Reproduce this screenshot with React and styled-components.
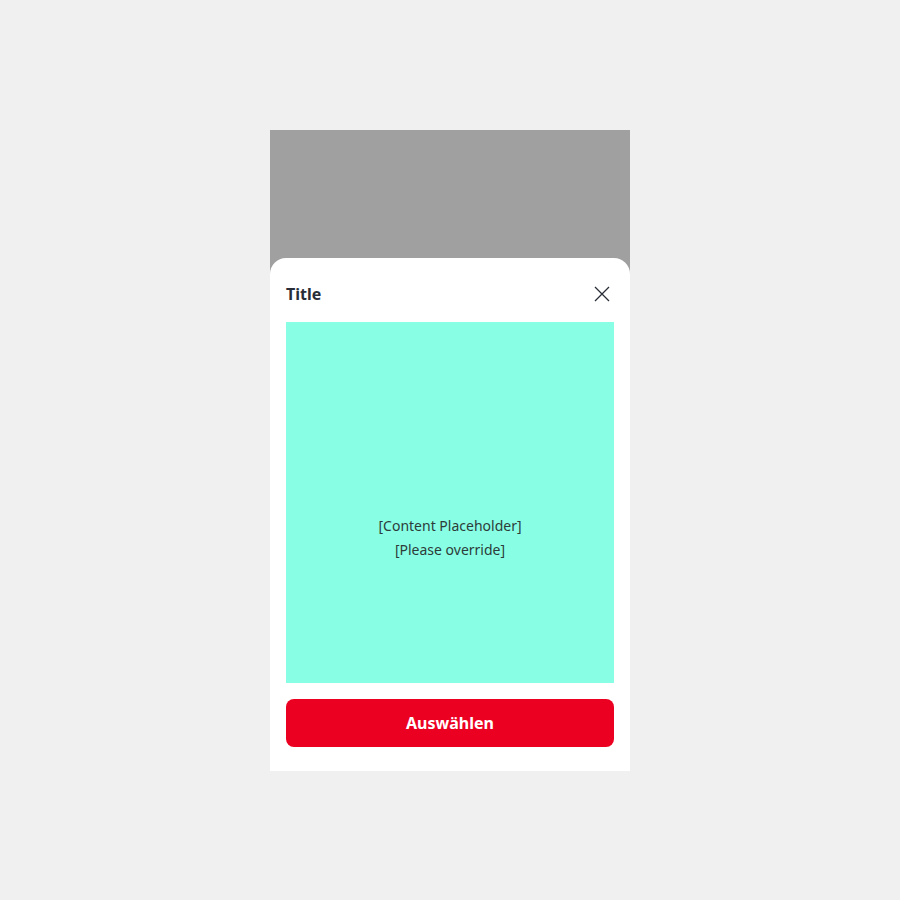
import React from 'react'
import styled, { createGlobalStyle } from 'styled-components'

const GlobalStyle = createGlobalStyle`
    html, body {
        margin: 0;
        padding: 0;
        background: #f0f0f0;
        font-family: "Noto Sans", "Open Sans", sans-serif;
    }
`

function CloseIcon() {
    return (
        <svg width="24" height="24" viewBox="0 0 24 24" fill="none">
            <path d="M5 5L19 19M19 5L5 19" stroke="#282d37" strokeWidth="1.3" />
        </svg>
    )
}

export default function App() {
    return (
        <Page>
            <GlobalStyle />
            <Frame>
                <Backdrop />
                <Sheet>
                    <Header>
                        <Title>Title</Title>
                        <CloseButton aria-label="Close">
                            <CloseIcon />
                        </CloseButton>
                    </Header>
                    <Placeholder>
                        <span>[Content Placeholder]</span>
                        <span>[Please override]</span>
                    </Placeholder>
                    <PrimaryButton>Auswählen</PrimaryButton>
                </Sheet>
            </Frame>
        </Page>
    )
}

const Page = styled.div`
    width: 900px;
    height: 900px;
    display: flex;
    justify-content: center;
    padding-top: 130px;
    box-sizing: border-box;
`

const Frame = styled.div`
    width: 360px;
    height: 641px;
    display: flex;
    flex-direction: column;
    background: #a0a0a0;
`

const Backdrop = styled.div`
    height: 128px;
    flex-shrink: 0;
`

const Sheet = styled.div`
    flex: 1;
    background: #fff;
    border-radius: 16px 16px 0 0;
    padding: 24px 16px;
    display: flex;
    flex-direction: column;
    gap: 16px;
`

const Header = styled.div`
    height: 24px;
    display: flex;
    align-items: center;
    justify-content: space-between;
`

const Title = styled.div`
    font-size: 16px;
    font-weight: 700;
    color: #282d37;
`

const CloseButton = styled.button`
    border: none;
    background: none;
    padding: 0;
    width: 24px;
    height: 24px;
    display: flex;
    cursor: pointer;
`

const Placeholder = styled.div`
    flex: 1;
    box-sizing: border-box;
    padding-top: 70px;
    background: #88ffe4;
    display: flex;
    flex-direction: column;
    align-items: center;
    justify-content: center;
    font-size: 14px;
    line-height: 24px;
    color: #2d3c3a;
`

const PrimaryButton = styled.button`
    height: 48px;
    flex-shrink: 0;
    border: none;
    border-radius: 8px;
    background: #ec0022;
    color: #fff;
    font-family: inherit;
    font-size: 16px;
    font-weight: 700;
    cursor: pointer;
`
